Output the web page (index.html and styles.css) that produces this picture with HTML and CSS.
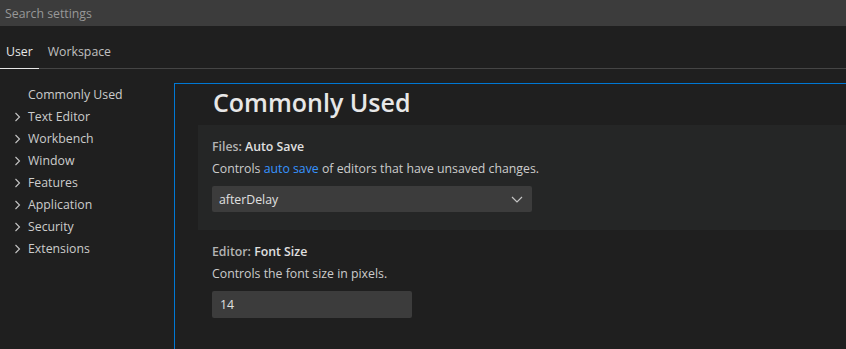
FILE: index.html
```html
<!DOCTYPE html>
<html lang="en">
<head>
    <meta charset="UTF-8">
    <meta name="viewport" content="width=device-width, initial-scale=1.0">
    <title>Settings</title>
    <link rel="stylesheet" href="styles.css">
</head>
<body>
    <div class="search-bar">
        <input type="text" class="search-input" placeholder="Search settings">
    </div>

    <div class="tabs">
        <div class="tab active">User</div>
        <div class="tab">Workspace</div>
    </div>

    <div class="main">
        <ul class="nav">
            <li class="nav-item no-arrow">Commonly Used</li>
            <li class="nav-item"><svg class="chev" width="8" height="10" viewBox="0 0 8 10"><path d="M1.5 1 L5.5 5 L1.5 9" fill="none" stroke="#c5c5c5" stroke-width="1.1"/></svg>Text Editor</li>
            <li class="nav-item"><svg class="chev" width="8" height="10" viewBox="0 0 8 10"><path d="M1.5 1 L5.5 5 L1.5 9" fill="none" stroke="#c5c5c5" stroke-width="1.1"/></svg>Workbench</li>
            <li class="nav-item"><svg class="chev" width="8" height="10" viewBox="0 0 8 10"><path d="M1.5 1 L5.5 5 L1.5 9" fill="none" stroke="#c5c5c5" stroke-width="1.1"/></svg>Window</li>
            <li class="nav-item"><svg class="chev" width="8" height="10" viewBox="0 0 8 10"><path d="M1.5 1 L5.5 5 L1.5 9" fill="none" stroke="#c5c5c5" stroke-width="1.1"/></svg>Features</li>
            <li class="nav-item"><svg class="chev" width="8" height="10" viewBox="0 0 8 10"><path d="M1.5 1 L5.5 5 L1.5 9" fill="none" stroke="#c5c5c5" stroke-width="1.1"/></svg>Application</li>
            <li class="nav-item"><svg class="chev" width="8" height="10" viewBox="0 0 8 10"><path d="M1.5 1 L5.5 5 L1.5 9" fill="none" stroke="#c5c5c5" stroke-width="1.1"/></svg>Security</li>
            <li class="nav-item"><svg class="chev" width="8" height="10" viewBox="0 0 8 10"><path d="M1.5 1 L5.5 5 L1.5 9" fill="none" stroke="#c5c5c5" stroke-width="1.1"/></svg>Extensions</li>
        </ul>

        <div class="content">
            <h1 class="group-title">Commonly Used</h1>

            <div class="setting focused">
                <div class="setting-label"><span class="category">Files: </span><span class="key">Auto Save</span></div>
                <div class="setting-desc">Controls <a href="#" class="link">auto save</a> of editors that have unsaved changes.</div>
                <div class="select">
                    <span>afterDelay</span>
                    <svg width="12" height="7" viewBox="0 0 12 7"><path d="M1 1 L6 6 L11 1" fill="none" stroke="#c5c5c5" stroke-width="1.2"/></svg>
                </div>
            </div>

            <div class="setting">
                <div class="setting-label"><span class="category">Editor: </span><span class="key">Font Size</span></div>
                <div class="setting-desc">Controls the font size in pixels.</div>
                <input type="text" class="num-input" value="14">
            </div>
        </div>
    </div>
</body>
</html>
```
FILE: styles.css
```css
body {
    margin: 0;
    background-color: #1f1f1f;
    color: #cccccc;
    font-family: "Open Sans", "Noto Sans", sans-serif;
    font-size: 12.3px;
    height: 100vh;
    overflow: hidden;
    display: flex;
    flex-direction: column;
}
.search-bar {
    height: 26px;
    flex-shrink: 0;
    background-color: #3c3c3c;
}
.search-input {
    width: 100%;
    height: 26px;
    box-sizing: border-box;
    border: none;
    outline: none;
    background: transparent;
    color: #cccccc;
    font-family: inherit;
    font-size: 12.3px;
    padding: 0 5px;
}
.search-input::placeholder {
    color: #989898;
}
.tabs {
    display: flex;
    height: 42px;
    flex-shrink: 0;
    border-bottom: 1px solid #454545;
}
.tab {
    padding: 17px 6px 0;
    color: #c0c0c0;
    line-height: 18px;
    margin-right: 3px;
}
.tab.active {
    color: #e7e7e7;
    border-bottom: 1px solid #e7e7e7;
    margin-bottom: -1px;
}
.main {
    flex: 1;
    display: flex;
    margin-top: 14px;
}
.nav {
    list-style: none;
    margin: 0;
    padding: 1px 0 0;
    width: 174px;
    flex-shrink: 0;
}
.nav-item {
    height: 22px;
    line-height: 22px;
    padding-left: 14px;
    display: flex;
    align-items: center;
    color: #cccccc;
}
.nav-item.no-arrow {
    padding-left: 28px;
}
.chev {
    margin-right: 6px;
}
.content {
    flex: 1;
    border-top: 1px solid #0078d4;
    border-left: 1px solid #0078d4;
}
.group-title {
    margin: 0;
    padding: 1px 0 0 38px;
    height: 40px;
    font-size: 25px;
    font-weight: 600;
    line-height: 34px;
    color: #e7e7e7;
}
.setting {
    margin-left: 23px;
    padding: 13px 14px 18px;
}
.setting.focused {
    background-color: #252626;
}
.setting-label {
    line-height: 18px;
    font-weight: 600;
}
.category {
    color: #b4b4b4;
}
.key {
    color: #e0e0e0;
}
.setting-desc {
    margin-top: 4px;
    line-height: 18px;
}
.link {
    color: #3794ff;
    text-decoration: none;
}
.select {
    margin-top: 8px;
    width: 320px;
    height: 26px;
    box-sizing: border-box;
    background-color: #3c3c3c;
    border-radius: 2px;
    display: flex;
    align-items: center;
    justify-content: space-between;
    padding: 0 9px 0 7px;
    color: #e0e0e0;
}
.num-input {
    display: block;
    margin-top: 8px;
    width: 200px;
    height: 27px;
    box-sizing: border-box;
    background-color: #3c3c3c;
    border: none;
    border-radius: 2px;
    padding: 0 8px;
    color: #e0e0e0;
    font-family: inherit;
    font-size: 12.3px;
    outline: none;
}
```
